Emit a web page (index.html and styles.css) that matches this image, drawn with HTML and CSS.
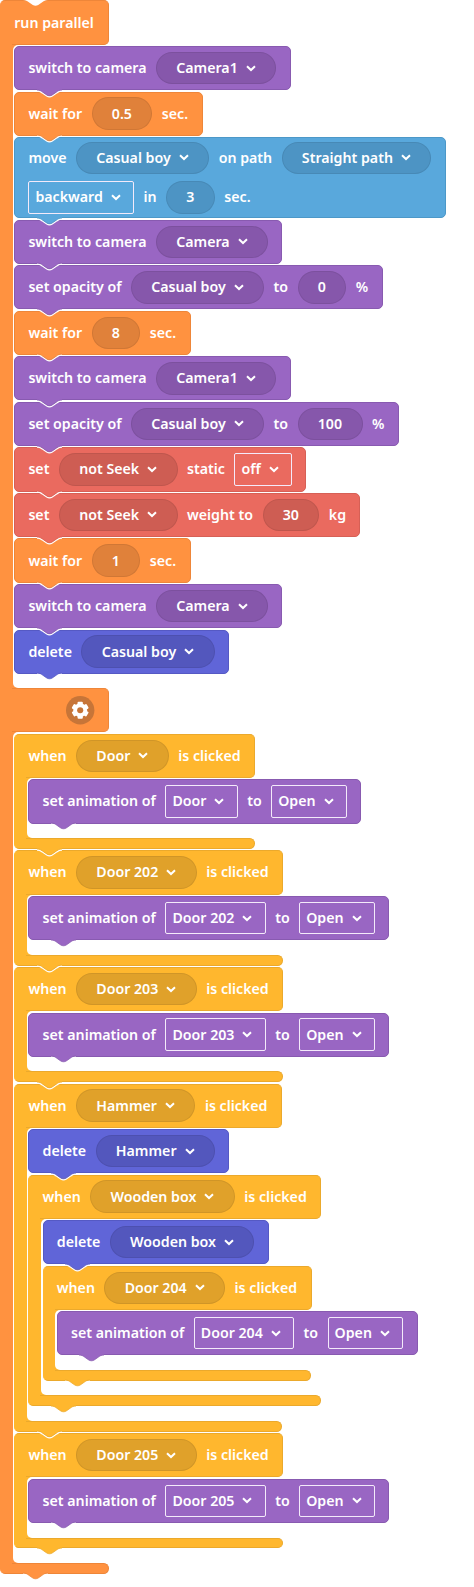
FILE: index.html
```
<!DOCTYPE html>
<html lang="en">
  <head>
    <meta charset="UTF-8" />
    <title>Blocks</title>
    <link rel="stylesheet" href="styles.css">
  </head>
  <body>
    <div id="workspace" class="workspace"></div>
    <script src="script.js"></script>
  </body>
</html>
```
FILE: styles.css
```
body {
  margin: 0;
  background-color: #ffffff;
  font-family: "Noto Sans", sans-serif;
  font-size: 14.2px;
  font-weight: 600;
  line-height: 20px;
  color: #ffffff;
}
.workspace {
  width: 474px;
  height: 1587px;
  overflow: hidden;
}
.control {
  --fill: #ff9240;
  --edge: #ee8639;
  --field: #e0813a;
}
.looks {
  --fill: #9966c3;
  --edge: #885ab0;
  --field: #8657ab;
}
.motion {
  --fill: #59a8dc;
  --edge: #4c98c8;
  --field: #4d94c4;
}
.physics {
  --fill: #ea6a5f;
  --edge: #d66056;
  --field: #ce5d53;
}
.object {
  --fill: #6065d8;
  --edge: #5559c4;
  --field: #5357bd;
}
.event {
  --fill: #ffb72e;
  --edge: #eba92c;
  --field: #e0a12a;
}
.stack {
  display: flex;
  flex-direction: column;
  align-items: flex-start;
  gap: 1.4px;
}
.block,
.container {
  position: relative;
}
.block,
.header {
  width: fit-content;
  background-color: var(--fill);
  border: 1px solid var(--edge);
  border-radius: 5px;
  box-sizing: border-box;
  padding: 0 13.4px 0 13.2px;
}
.header {
  border-bottom-left-radius: 0;
  border-left-color: var(--fill);
  min-width: 108.7px;
}
/* hides the header and footer edges where they meet the left column */
.container::before {
  content: "";
  position: absolute;
  left: 0;
  top: 6px;
  bottom: 6px;
  width: 12px;
  background-color: var(--fill);
}
.row {
  display: flex;
  align-items: center;
  gap: 9.5px;
  height: 42.15px;
  white-space: nowrap;
}
.title .row {
  padding-top: 1px;
  height: 41.6px;
}
.tall .row {
  height: 40px;
}
.tall .row:first-child {
  height: 39.3px;
}
.value,
.menu {
  display: flex;
  align-items: center;
  box-sizing: border-box;
  height: 32.4px;
}
.value {
  padding: 0 19.4px 0 19.2px;
  border: 1px solid rgba(0, 0, 0, 0.07);
  border-radius: 17px;
  background-color: var(--field);
}
.menu {
  padding: 0 12.2px 0 6px;
  border: 1px solid #f4eafa;
  border-radius: 2px;
}
.chevron {
  width: 10px;
  height: 7px;
  margin-left: 8px;
  fill: none;
  stroke: #ffffff;
  stroke-width: 2;
}
.mouth {
  background: linear-gradient(var(--fill), var(--fill)) 0 0 / 20px 100% no-repeat;
  padding-left: 12.8px;
}
.inner {
  position: relative;
  background-color: #ffffff;
  border-radius: 5px 0 0 5px;
  padding: 1.4px 0 14.7px 1.4px;
}
.footer {
  height: 10.8px;
  box-sizing: border-box;
  background-color: var(--fill);
  border: 1px solid var(--edge);
  border-left-color: var(--fill);
  border-radius: 0 5.4px 5.4px 5px;
}
.tab {
  position: absolute;
  z-index: 2;
  left: 22.5px;
  bottom: -7.5px;
  width: 25px;
  height: 10px;
  fill: var(--fill);
}
.block > .tab {
  left: 21.5px;
  bottom: -8.5px;
}
.tab .line {
  fill: none;
  stroke: #ffffff;
  stroke-width: 1.5;
}
.tab .edge {
  fill: none;
  stroke: var(--edge);
  stroke-width: 0.8;
}
.notch {
  position: absolute;
  left: 22.5px;
  top: -2px;
  width: 25px;
  height: 10px;
  fill: #ffffff;
}
.gear {
  width: 28.4px;
  height: 28.4px;
  margin-left: 52px;
}
```
FILE: script.js
```
// fields: plain string = label, [x] = menu, {v, drop} = value
const drop = (v) => ({ v, drop: true });
const num = (v) => ({ v });

const chevron =
  '<svg class="chevron" viewBox="0 0 10 7"><path d="M1 1.2L5 5L9 1.2"/></svg>';
const tabPath = "M0 2C3 2 4 3 5.5 4L9.8 7C11.6 8 13.4 8 15.2 7L19.5 4C21 3 22 2 25 2";
const tab = `<svg class="tab" viewBox="0 0 25 10"><path class="line" transform="translate(0 .9)" d="${tabPath}"/><path d="${tabPath}L25 0H0Z"/><path class="edge" d="${tabPath}"/></svg>`;
const notch = `<svg class="notch" viewBox="0 0 25 10"><path d="${tabPath}L25 0H0Z"/></svg>`;
const gear =
  '<svg class="gear" viewBox="0 0 28 28"><circle cx="14" cy="14" r="14" fill="#c77538"/><g fill="#fff"><circle cx="14" cy="14" r="6.8"/>' +
  [0, 60, 120]
    .map((a) => `<rect x="11.4" y="5.6" width="5.2" height="16.8" rx="1" transform="rotate(${a} 14 14)"/>`)
    .join("") +
  '</g><circle cx="14" cy="14" r="3" fill="#c77538"/></svg>';

function field(f) {
  if (f === "gear") return gear;
  if (typeof f === "string") return `<span>${f}</span>`;
  if (Array.isArray(f)) return `<div class="menu">${f[0]}${chevron}</div>`;
  return `<div class="value">${f.v}${f.drop ? chevron : ""}</div>`;
}

const row = (...fields) => `<div class="row">${fields.map(field).join("")}</div>`;
const block = (type, ...fields) => `<div class="block ${type}">${row(...fields)}${tab}</div>`;
const stack = (items) => `<div class="mouth"><div class="inner"><div class="stack">${items.join("")}</div></div></div>`;

function when(name, width, items) {
  return `<div class="container event"><div class="header">${row("when", drop(name), "is clicked")}</div>${stack(items)}<div class="footer" style="width: ${width}px"></div>${tab}</div>`;
}

const camera = (name) => block("looks", "switch to camera", drop(name));
const wait = (n) => block("control", "wait for", num(n), "sec.");
const opacity = (n) => block("looks", "set opacity of", drop("Casual boy"), "to", num(n), "%");
const animate = (name) => block("looks", "set animation of", [name], "to", ["Open"]);
const remove = (name) => block("object", "delete", drop(name));

const first = [
  camera("Camera1"),
  wait("0.5"),
  `<div class="block tall motion">${row("move", drop("Casual boy"), "on path", drop("Straight path"))}${row(["backward"], "in", num("3"), "sec.")}${tab}</div>`,
  camera("Camera"),
  opacity("0"),
  wait("8"),
  camera("Camera1"),
  opacity("100"),
  block("physics", "set", drop("not Seek"), "static", ["off"]),
  block("physics", "set", drop("not Seek"), "weight to", num("30"), "kg"),
  wait("1"),
  camera("Camera"),
  remove("Casual boy"),
];

const second = [
  when("Door", 240.7, [animate("Door")]),
  when("Door 202", 268.5, [animate("Door 202")]),
  when("Door 203", 268.5, [animate("Door 203")]),
  when("Hammer", 267.6, [
    remove("Hammer"),
    when("Wooden box", 292.4, [
      remove("Wooden box"),
      when("Door 204", 268.5, [animate("Door 204")]),
    ]),
  ]),
  when("Door 205", 268.5, [animate("Door 205")]),
];

document.getElementById("workspace").innerHTML =
  `<div class="container control"><div class="header title">${row("run parallel")}</div>${stack(first)}` +
  `<div class="header">${row("gear")}</div>${stack(second)}<div class="footer" style="width: 108.7px"></div>${notch}${tab}</div>`;
```
